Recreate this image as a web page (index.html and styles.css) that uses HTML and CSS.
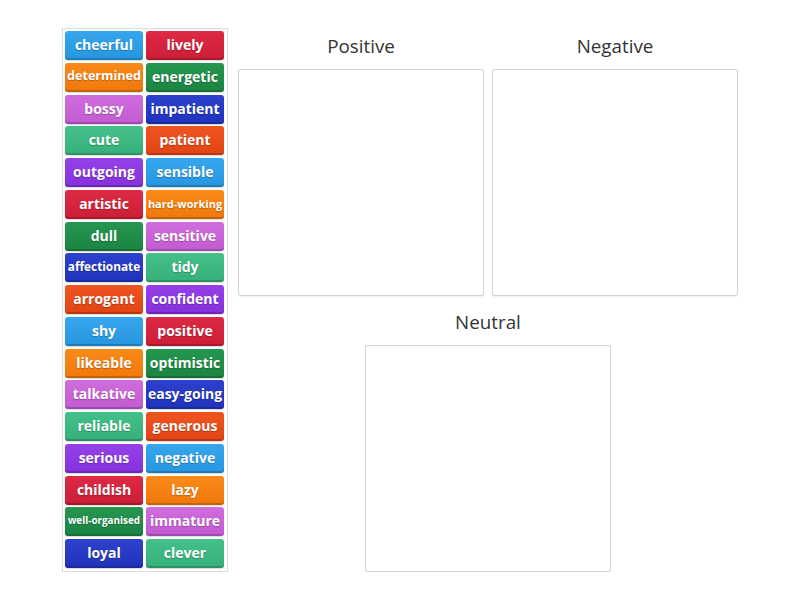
FILE: index.html
```html
<!DOCTYPE html>
<html lang="en">
<head>
<meta charset="utf-8">
<title>Group sort</title>
<link rel="stylesheet" href="styles.css">
</head>
<body>
<div class="page">
  <div class="bank">
    <div class="tile blue">cheerful</div>
    <div class="tile red">lively</div>
    <div class="tile orange s13">determined</div>
    <div class="tile green">energetic</div>
    <div class="tile pink">bossy</div>
    <div class="tile navy">impatient</div>
    <div class="tile teal">cute</div>
    <div class="tile vermil">patient</div>
    <div class="tile purple">outgoing</div>
    <div class="tile blue">sensible</div>
    <div class="tile red">artistic</div>
    <div class="tile orange s11">hard-working</div>
    <div class="tile green">dull</div>
    <div class="tile pink">sensitive</div>
    <div class="tile navy s12">affectionate</div>
    <div class="tile teal">tidy</div>
    <div class="tile vermil">arrogant</div>
    <div class="tile purple">confident</div>
    <div class="tile blue">shy</div>
    <div class="tile red">positive</div>
    <div class="tile orange">likeable</div>
    <div class="tile green">optimistic</div>
    <div class="tile pink">talkative</div>
    <div class="tile navy">easy-going</div>
    <div class="tile teal">reliable</div>
    <div class="tile vermil">generous</div>
    <div class="tile purple">serious</div>
    <div class="tile blue">negative</div>
    <div class="tile red">childish</div>
    <div class="tile orange">lazy</div>
    <div class="tile green s10">well-organised</div>
    <div class="tile pink">immature</div>
    <div class="tile navy">loyal</div>
    <div class="tile teal">clever</div>
  </div>
  <div class="groups">
    <div class="row">
      <div class="group">
        <div class="title">Positive</div>
        <div class="box"></div>
      </div>
      <div class="group">
        <div class="title">Negative</div>
        <div class="box"></div>
      </div>
    </div>
    <div class="row">
      <div class="group">
        <div class="title">Neutral</div>
        <div class="box"></div>
      </div>
    </div>
  </div>
</div>
</body>
</html>
```

FILE: styles.css
```css
html, body {
  margin: 0;
  padding: 0;
  background: #ffffff;
}
body {
  font-family: "Open Sans", "Noto Sans", sans-serif;
}
.page {
  display: flex;
  align-items: flex-start;
  padding: 28px 0 0 62px;
  gap: 10px;
}
.bank {
  display: grid;
  grid-template-columns: 78px 78px;
  grid-auto-rows: 29px;
  column-gap: 3px;
  row-gap: 2.75px;
  padding: 2px 3px 3px 2px;
  border: 1px solid #dcdcdc;
}
.tile {
  box-sizing: border-box;
  display: flex;
  align-items: center;
  justify-content: center;
  border-radius: 3px;
  color: #ffffff;
  font-weight: 700;
  font-size: 14px;
  line-height: 1;
  white-space: nowrap;
  padding-bottom: 1px;
  text-shadow: 0 1px 1px rgba(0, 0, 0, 0.25);
  box-shadow: inset 0 -2px 0 rgba(0, 0, 0, 0.18), 0 1px 1px rgba(0, 0, 0, 0.15);
}
.s13 { font-size: 12.6px; }
.s12 { font-size: 11.8px; }
.s11 { font-size: 11px; }
.s10 { font-size: 9.9px; }
.blue   { background: linear-gradient(#36a6ee, #2796e0); }
.red    { background: linear-gradient(#de2a44, #cc1d37); }
.orange { background: linear-gradient(#fa8a18, #f0780c); }
.green  { background: linear-gradient(#259650, #1b8442); }
.pink   { background: linear-gradient(#d06ddd, #c25ad1); }
.navy   { background: linear-gradient(#2c41cc, #2133bd); }
.teal   { background: linear-gradient(#44c08a, #36b079); }
.vermil { background: linear-gradient(#ee5420, #e24414); }
.purple { background: linear-gradient(#9541e8, #8530dc); }
.groups {
  width: 500px;
  display: flex;
  flex-direction: column;
  gap: 14px;
  padding-top: 6px;
}
.row {
  display: flex;
  justify-content: center;
  gap: 8px;
}
.group {
  width: 246px;
  display: flex;
  flex-direction: column;
}
.title {
  height: 25px;
  line-height: 25px;
  margin-bottom: 10px;
  text-align: center;
  font-size: 18.8px;
  color: #333333;
}
.box {
  box-sizing: border-box;
  height: 227px;
  border: 1px solid #d2d2d2;
  border-radius: 2px;
  box-shadow: 0 1px 1px rgba(0, 0, 0, 0.06);
}
```
